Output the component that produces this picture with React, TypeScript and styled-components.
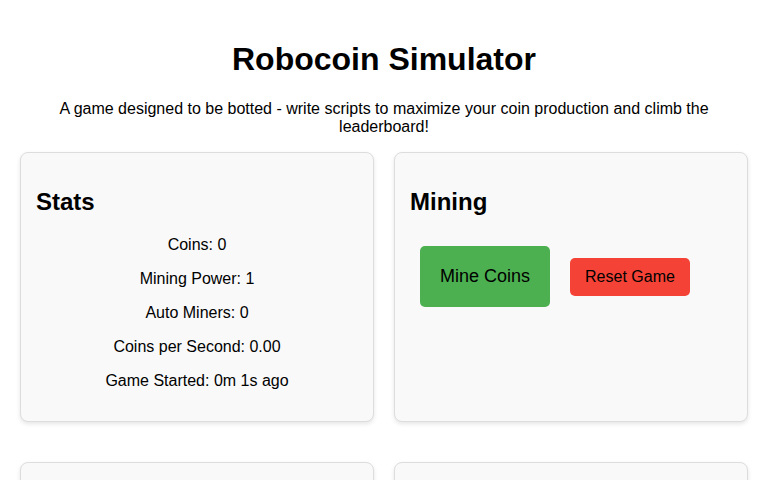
import * as React from "react"
import styled, { createGlobalStyle } from "styled-components"

const GlobalStyle = createGlobalStyle`
  body {
    margin: 0;
    background: #ffffff;
    color: #000000;
    font-family: "Liberation Sans", Arial, sans-serif;
  }
`

const Page = styled.div`
  padding: 20px;
  text-align: center;
`
const Title = styled.h1`
  font-size: 32px;
  font-weight: bold;
  margin: 21.44px 0;
`
const Subtitle = styled.p`
  font-size: 16px;
  margin: 16px 0;
`
const Grid = styled.div`
  display: grid;
  grid-template-columns: 1fr 1fr;
  gap: 40px 20px;
  text-align: left;
`
const Card = styled.section`
  background-color: #f9f9f9;
  border: 1px solid #ddd;
  border-radius: 8px;
  box-shadow: 0 2px 4px rgba(0, 0, 0, 0.1);
  padding: 15px;
  min-height: 238px;
`
const CardTitle = styled.h2`
  font-size: 24px;
  font-weight: bold;
  margin: 19.92px 0;
`
const StatLine = styled.p`
  font-size: 16px;
  margin: 16px 0;
  text-align: center;
`
const Button = styled.button<{ $variant: "mine" | "reset" }>`
  border: none;
  border-radius: 5px;
  color: #000000;
  cursor: pointer;
  font-family: "Liberation Sans", Arial, sans-serif;
  margin: 10px;
  background-color: ${(p) => (p.$variant === "mine" ? "#4caf50" : "#f44336")};
  font-size: ${(p) => (p.$variant === "mine" ? "18px" : "16px")};
  padding: ${(p) => (p.$variant === "mine" ? "20px" : "10px 15px")};
`

const stats = [
  "Coins: 0",
  "Mining Power: 1",
  "Auto Miners: 0",
  "Coins per Second: 0.00",
  "Game Started: 0m 1s ago",
]

export default function App() {
  return (
    <Page>
      <GlobalStyle />
      <Title>Robocoin Simulator</Title>
      <Subtitle>
        A game designed to be botted - write scripts to maximize your coin
        production and climb the leaderboard!
      </Subtitle>
      <Grid>
        <Card>
          <CardTitle>Stats</CardTitle>
          {stats.map((s) => (
            <StatLine key={s}>{s}</StatLine>
          ))}
        </Card>
        <Card>
          <CardTitle>Mining</CardTitle>
          <Button $variant="mine">Mine Coins</Button>
          <Button $variant="reset">Reset Game</Button>
        </Card>
        <Card />
        <Card />
      </Grid>
    </Page>
  )
}
